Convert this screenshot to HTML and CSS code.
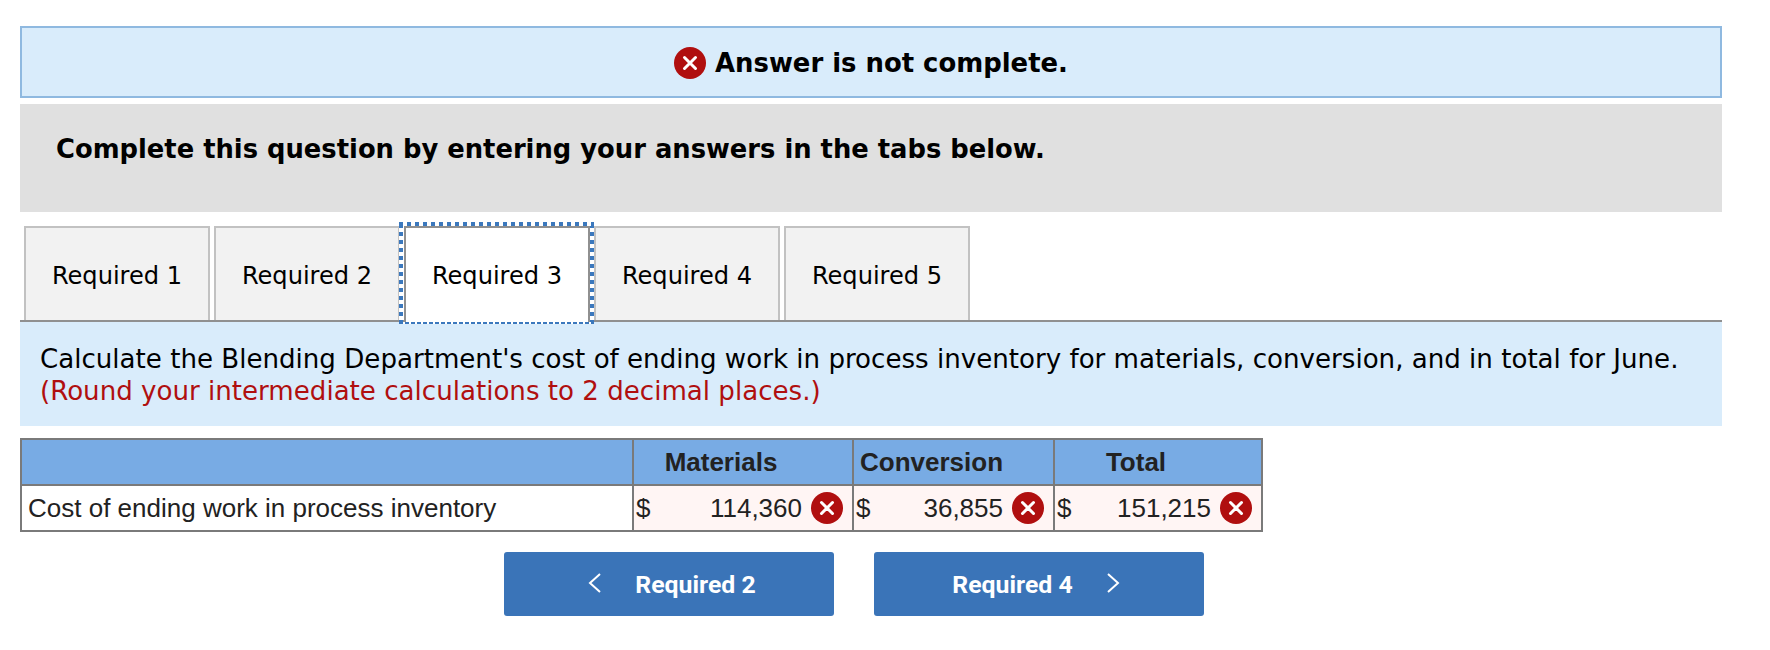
FILE: index.html
```html
<!DOCTYPE html>
<html lang="en">
<head>
    <meta charset="UTF-8">
    <meta name="viewport" content="width=device-width, initial-scale=1.0">
    <title>Answer is not complete</title>
    <link rel="stylesheet" href="styles.css">
</head>
<body>

<div class="banner">
    <svg class="x-icon" viewBox="0 0 32 32"><circle cx="16" cy="16" r="16"/><path d="M10.5 10.5l11 11M21.5 10.5l-11 11"/></svg>
    <strong>Answer is not complete.</strong>
</div>

<div class="intro">Complete this question by entering your answers in the tabs below.</div>

<div class="tabs">
    <div class="tab">Required 1</div>
    <div class="tab">Required 2</div>
    <div class="tab active">Required 3</div>
    <div class="tab">Required 4</div>
    <div class="tab">Required 5</div>
</div>

<div class="panel">
    Calculate the Blending Department's cost of ending work in process inventory for materials, conversion, and in total for June.<br>
    <span class="note">(Round your intermediate calculations to 2 decimal places.)</span>
</div>

<table class="answers">
    <colgroup>
        <col class="col-label">
        <col class="col-materials">
        <col class="col-conversion">
        <col class="col-total">
    </colgroup>
    <tr>
        <th></th>
        <th>Materials</th>
        <th>Conversion</th>
        <th>Total</th>
    </tr>
    <tr>
        <td class="label">Cost of ending work in process inventory</td>
        <td class="wrong"><div class="cell"><span>$</span><span class="num">114,360</span><svg class="x-icon" viewBox="0 0 32 32"><circle cx="16" cy="16" r="16"/><path d="M10.5 10.5l11 11M21.5 10.5l-11 11"/></svg></div></td>
        <td class="wrong"><div class="cell"><span>$</span><span class="num">36,855</span><svg class="x-icon" viewBox="0 0 32 32"><circle cx="16" cy="16" r="16"/><path d="M10.5 10.5l11 11M21.5 10.5l-11 11"/></svg></div></td>
        <td class="wrong"><div class="cell"><span>$</span><span class="num">151,215</span><svg class="x-icon" viewBox="0 0 32 32"><circle cx="16" cy="16" r="16"/><path d="M10.5 10.5l11 11M21.5 10.5l-11 11"/></svg></div></td>
    </tr>
</table>

<div class="nav">
    <button class="nav-button prev">
        <svg class="chevron" viewBox="0 0 13 20"><path d="M12 1L2 10l10 9"/></svg>
        Required 2
    </button>
    <button class="nav-button next">
        Required 4
        <svg class="chevron" viewBox="0 0 13 20"><path d="M1 1l10 9-10 9"/></svg>
    </button>
</div>

</body>
</html>
```

FILE: styles.css
```css
body {
    font-family: "DejaVu Sans", sans-serif;
    margin: 0;
    padding: 26px 48px 0 20px;
    background-color: #fff;
    color: #000;
}

.x-icon {
    width: 32px;
    height: 32px;
    flex-shrink: 0;
}

.x-icon circle {
    fill: #b00f0f;
}

.x-icon path {
    fill: none;
    stroke: #fff;
    stroke-width: 3;
    stroke-linecap: round;
}

.banner {
    display: flex;
    align-items: center;
    justify-content: center;
    gap: 9px;
    height: 72px;
    box-sizing: border-box;
    padding: 1px 0 0 0;
    border: 2px solid #8fb9e0;
    background-color: #d9ecfb;
    font-size: 25.9px;
}

.intro {
    height: 108px;
    margin-top: 6px;
    padding: 30px 36px 0;
    box-sizing: border-box;
    background-color: #e0e0e0;
    font-size: 25.8px;
    font-weight: bold;
    line-height: 30px;
}

.tabs {
    display: flex;
    gap: 4px;
    height: 94px;
    margin-top: 14px;
    padding-left: 4px;
    border-bottom: 2px solid #909090;
}

.tab {
    position: relative;
    display: flex;
    align-items: center;
    justify-content: center;
    width: 186px;
    height: 94px;
    box-sizing: border-box;
    padding-top: 4px;
    border: 2px solid #c2c2c2;
    border-bottom: none;
    background-color: #f2f2f2;
    font-size: 24.1px;
}

.tab.active {
    height: 96px;
    padding-bottom: 2px;
    border-color: #909090;
    background-color: #fff;
}

/* focus ring, drawn square like the original rather than with outline: dotted */
.tab.active::after {
    content: "";
    position: absolute;
    top: -6px;
    left: -7px;
    right: -6px;
    bottom: -2px;
    background:
        repeating-linear-gradient(90deg, #3b78bd 0 4px, #fff 4px 8px) top / 100% 4px no-repeat,
        repeating-linear-gradient(90deg, #3b78bd 0 4px, #fff 4px 6px) bottom / 100% 2px no-repeat,
        repeating-linear-gradient(0deg, #3b78bd 0 4px, #fff 4px 8px) left / 4px 100% no-repeat,
        repeating-linear-gradient(0deg, #3b78bd 0 4px, #fff 4px 8px) right / 4px 100% no-repeat;
    -webkit-mask:
        linear-gradient(#000 0 0) top / 100% 4px no-repeat,
        linear-gradient(#000 0 0) bottom / 100% 2px no-repeat,
        linear-gradient(#000 0 0) left / 4px 100% no-repeat,
        linear-gradient(#000 0 0) right / 4px 100% no-repeat;
}

.panel {
    height: 104px;
    box-sizing: border-box;
    padding: 21px 20px 0;
    background-color: #d9ecfb;
    font-size: 26.1px;
    line-height: 32px;
}

.note {
    color: #b00f0f;
}

.answers {
    width: 1241px;
    margin-top: 12px;
    border-collapse: collapse;
    table-layout: fixed;
    font-family: "Liberation Sans", Arial, sans-serif;
    font-size: 26px;
    color: #222;
}

.col-label {
    width: 612px;
}

.col-materials {
    width: 220px;
}

.col-conversion {
    width: 201px;
}

.col-total {
    width: 208px;
}

.answers th, .answers td {
    height: 44px;
    padding: 0;
    border: 2px solid #7a7a7a;
}

.answers th {
    padding-right: 44px;
    background-color: #78abe4;
    font-weight: bold;
    text-align: center;
}

.answers .label {
    padding-left: 6px;
}

.wrong {
    background-color: #fff5f4;
}

.cell {
    display: flex;
    align-items: center;
    gap: 9px;
    padding: 0 9px 0 2px;
}

.num {
    flex: 1;
    text-align: right;
}

.nav {
    display: flex;
    gap: 40px;
    margin-top: 20px;
    padding-left: 484px;
}

.nav-button {
    display: flex;
    align-items: center;
    justify-content: center;
    gap: 34px;
    width: 330px;
    height: 64px;
    padding: 0;
    border: none;
    border-radius: 3px;
    background-color: #3a74b8;
    color: #fff;
    font-family: Roboto, sans-serif;
    font-size: 24.8px;
    font-weight: bold;
}

.nav-button.prev {
    padding-left: 6px;
}

.nav-button.next {
    padding-right: 6px;
}

.chevron {
    width: 13px;
    height: 20px;
    margin-bottom: 3px;
    fill: none;
    stroke: #fff;
    stroke-width: 2;
}
```
